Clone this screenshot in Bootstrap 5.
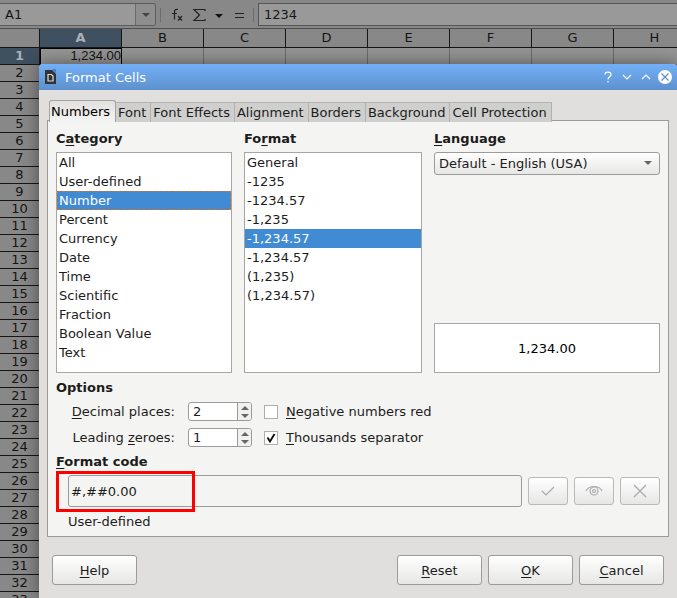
<!DOCTYPE html>
<html lang="en">
<head>
<meta charset="utf-8">
<meta name="viewport" content="width=device-width, initial-scale=1">
<title>Format Cells</title>
<link href="https://cdn.jsdelivr.net/npm/bootstrap@5.3.0/dist/css/bootstrap.min.css" rel="stylesheet">
<style>
  body { font-family: "DejaVu Sans", sans-serif; font-size: 13px; line-height: 19px; color: #1c1c1c; background: #8e8e8e; }
  button, input, select { color: inherit; font: inherit; }
  u { text-underline-offset: 2px; text-decoration-thickness: 1px; }

  /* spreadsheet behind the dialog */
  .formula-bar { height: 28px; background: #888; padding: 3px 0 2px; color: #161616; }
  .name-box { width: 156px; border: 1px solid #5c5c5c; border-left: 0; border-radius: 0 3px 3px 0; background: #999; overflow: hidden; }
  .name-box input { min-width: 0; border: 0; background: none; padding: 0 5px; }
  .name-box button { width: 20px; flex-shrink: 0; border: 0; border-left: 1px solid #6a6a6a; background: #8e8e8e; padding: 0; line-height: 0; }
  .tool { border: 0; background: none; padding: 0; line-height: 0; }
  .divide { width: 1px; height: 14px; background: #6c6c6c; }
  .formula-input { min-width: 0; border: 1px solid #555; border-right: 0; background: #999; padding: 0 5px; }
  .sheet { width: 696px; table-layout: fixed; border-collapse: separate; border-spacing: 0; border-top: 1px solid #4e4e4e; line-height: 16px; color: #141414; }
  .sheet th, .sheet td { padding: 0; font-weight: 400; text-align: center; overflow: visible; }
  .sheet thead th { height: 19px; background: #888; border-right: 1px solid #161616; border-bottom: 1px solid #161616; }
  .sheet tbody th { height: 17px; background: #888; border-right: 1px solid #161616; border-bottom: 1px solid #161616; }
  .sheet td { background: #959595; border-right: 1px solid #6d6d6d; border-bottom: 1px solid #6d6d6d; }
  .sheet .corner { width: 40px; }
  .sheet th.picked { background: #3f5060; color: #aab1b8; font-weight: 700; }
  .sheet td.current { font-family: "Liberation Sans", sans-serif; text-align: right; outline: 1px solid #000; outline-offset: -1px; box-shadow: 1px 0 #000; }

  /* dialog window */
  .dialog-window { position: absolute; left: 39px; right: 0; top: 64px; min-height: 534px; background: #e0dfdd; border-radius: 4px 4px 0 0; box-shadow: 0 0 18px rgba(0,0,0,.45); }
  .title-bar { height: 26px; padding: 0 4px 0 5px; color: #fff; background: linear-gradient(#73b0f8, #5d91cd); border-radius: 4px 4px 0 0; }
  .title-bar button { border: 0; background: none; padding: 0; line-height: 0; }
  .dialog-tabs { border: 0; padding: 10px 10px 0; margin-bottom: -2px; position: relative; z-index: 1; align-items: flex-end; }
  .dialog-tabs .nav-link, .dialog-tabs .nav-link:hover { padding: 0 4px 0 2px; height: 20px; border: 1px solid #b2b1af; border-left-width: 0; border-bottom: 0; border-radius: 0; margin: 0; color: #1c1c1c; background: #cfcfcd; line-height: 18px; }
  .dialog-tabs .nav-link.active { height: 22px; padding: 0 5px 0 1px; border-left-width: 1px; border-color: #a3a3a1; border-radius: 3px 3px 0 0; background: linear-gradient(#e2e1df, #f4f4f2); line-height: 20px; }
  .tab-panel { margin: 0 8px; padding: 8px 8px 5px; border: 1px solid #9b9b99; background: #f4f4f2; }
  .heading { font-size: 13px; font-weight: 700; line-height: 19px; margin: 0; }
  .pickers { display: grid; grid-template-columns: 176fr 178fr 226fr; column-gap: 12px; }
  .pick-list { height: 221px; margin-top: 4px; border: 1px solid #a6a6a4; border-radius: 0; background: #fff; }
  .pick-list .list-group-item { padding: 0 2px; border: 0; color: #1c1c1c; line-height: 19px; }
  .pick-list .list-group-item.active { background: #418bd4; color: #fff; margin: 0; }
  .pick-list .list-group-item.focused { border: 1px dashed #c8742a; padding: 0 1px; line-height: 17px; }
  .raised { border: 1px solid #9b9b99; border-radius: 3px; background: linear-gradient(#fff, #e6e6e5); padding: 0; }
  .language { width: 100%; height: 23px; margin-top: 4px; padding: 0 4px; appearance: none; }
  .arrow { pointer-events: none; }
  .preview { height: 50px; border: 1px solid #a6a6a4; background: #fff; color: #000; }
  .options-heading { margin-top: 5px; }
  .options { display: grid; grid-template-columns: 119px 64px 1fr; column-gap: 13px; row-gap: 7px; margin-top: 5px; }
  .options > * { height: 19px; }
  .spinner { border: 1px solid #9b9b99; border-radius: 3px; background: #fff; overflow: hidden; }
  .spinner input { width: 48px; border: 0; padding: 0 0 0 4px; background: none; appearance: textfield; }
  .spinner input::-webkit-inner-spin-button { display: none; }
  .steps { border-left: 1px solid #9b9b99; background: #f0f0ef; }
  .steps button { border: 0; background: none; padding: 0; line-height: 0; }
  .tick { width: 14px; height: 14px; margin: 0 8px 0 -1px; border: 1px solid #aeaeac; background: #fff; appearance: none; }
  .tick:checked { background: #fff url("data:image/svg+xml,%3Csvg xmlns='http://www.w3.org/2000/svg' viewBox='0 0 12 12'%3E%3Cpath d='M2.5 5.5L5 9.5L9.5 2' fill='none' stroke='%23111' stroke-width='1.9'/%3E%3C/svg%3E") center/12px no-repeat; }
  .code-label { margin-top: 5px; }
  .code-row { margin: 4px 0 5px 12px; }
  .code-input { min-width: 0; height: 32px; border: 1px solid #9b9b99; border-radius: 3px; background: #f4f4f2; padding: 0 2px; }
  .code-buttons { gap: 6px; margin-left: 6px; }
  .code-button { width: 40px; height: 28px; border-color: #bababa; line-height: 0; }
  .callout { position: absolute; left: -12px; top: -4px; width: 139px; height: 41px; border: 3px solid #f00; pointer-events: none; }
  .footer-bar { gap: 6px; padding: 18px 13px 13px; }
  .footer-bar button { width: 85px; height: 30px; }
</style>
<script src="https://cdn.jsdelivr.net/npm/bootstrap@5.3.0/dist/js/bootstrap.bundle.min.js"></script>
</head>
<body class="position-relative vh-100 overflow-hidden">
<div class="formula-bar d-flex">
  <div class="name-box d-flex flex-shrink-0">
    <input class="flex-grow-1" type="text" value="A1" aria-label="Name box">
    <button type="button" aria-label="Open name list"><svg width="10" height="6"><path d="M1 1h8L5 5z" fill="#444"/></svg></button>
  </div>
  <div class="d-flex align-items-center flex-shrink-0 ps-1"><span class="divide"></span></div>
  <div class="d-flex align-items-center flex-shrink-0 ps-2">
    <button class="tool" type="button" aria-label="Function wizard"><svg width="15" height="16" fill="none" stroke="#222"><path d="M9 2.500C6.500 2 5.500 3 5.500 5v7.500M3 6.500h5" stroke-width="1.200"/><path d="M9 9l4 4.500M13 9l-4 4.500" stroke-width="1.200"/></svg></button>
    <button class="tool ms-2" type="button" aria-label="Sum"><svg width="15" height="16" fill="none" stroke="#222"><path d="M13 4V2.500H2L7.500 8L2 13.500H13V12" stroke-width="1.200"/></svg></button>
    <button class="tool ms-2" type="button" aria-label="Sum options"><svg width="8" height="10"><path d="M0 4h8L4 8z" fill="#111"/></svg></button>
    <button class="tool ms-2 ps-1" type="button" aria-label="Formula"><svg width="10" height="10" stroke="#222"><path d="M0 3.500h9M0 7.500h9"/></svg></button>
    <span class="divide ms-2 me-1"></span>
  </div>
  <input class="formula-input flex-grow-1" type="text" value="1234" aria-label="Formula input">
</div>
<table class="sheet">
  <thead><tr><th class="corner"></th><th class="picked">A</th><th>B</th><th>C</th><th>D</th><th>E</th><th>F</th><th>G</th><th>H</th></tr></thead>
  <tbody id="rows">
    <tr><th class="picked">1</th><td class="current">1,234.00</td><td></td><td></td><td></td><td></td><td></td><td></td><td></td></tr>
  </tbody>
</table>

<div class="dialog-window" role="dialog" aria-labelledby="dialog-title">
  <div class="title-bar d-flex align-items-center">
    <svg width="13" height="16"><path d="M1 1h7l4 4v10H1z" fill="#303338"/><path d="M8 0h4v5z" fill="#4d80bc"/><path d="M4 5.500h3.500l1.500 1.500v5H4z" fill="none" stroke="#ddd" stroke-width="1.200"/></svg>
    <span id="dialog-title" class="ms-2 flex-grow-1">Format Cells</span>
    <div class="d-flex align-items-center gap-1">
      <button type="button" aria-label="Help"><svg width="14" height="14" fill="none" stroke="#fff" stroke-width="1.200"><path d="M4 4.500C4 1 10 1.500 10 4.500C10 7 7 6.500 7 9.500M7 11v1.500"/></svg></button>
      <button type="button" aria-label="Minimize"><svg width="15" height="14" fill="none" stroke="#fff" stroke-width="1.200"><path d="M4 5l4 4l4-4"/></svg></button>
      <button type="button" aria-label="Maximize"><svg width="15" height="14" fill="none" stroke="#fff" stroke-width="1.200"><path d="M4 9l4-4l4 4"/></svg></button>
      <button type="button" aria-label="Close"><svg width="16" height="16"><circle cx="8" cy="8" r="7" fill="#fff"/><path d="M4.500 4.500l7 7m0-7l-7 7" stroke="#5b8dc8" stroke-width="1.200"/></svg></button>
    </div>
  </div>
  <div class="nav nav-tabs dialog-tabs flex-nowrap text-nowrap" role="tablist">
    <button class="nav-link active" type="button" role="tab">Numbers</button>
    <button class="nav-link" type="button" role="tab">Font</button>
    <button class="nav-link" type="button" role="tab">Font Effects</button>
    <button class="nav-link" type="button" role="tab">Alignment</button>
    <button class="nav-link" type="button" role="tab">Borders</button>
    <button class="nav-link" type="button" role="tab">Background</button>
    <button class="nav-link" type="button" role="tab">Cell Protection</button>
  </div>
  <div class="tab-panel" role="tabpanel">
    <div class="pickers">
      <div>
        <h2 class="heading">C<u>a</u>tegory</h2>
        <div class="list-group pick-list">
          <button type="button" class="list-group-item list-group-item-action">All</button>
          <button type="button" class="list-group-item list-group-item-action">User-defined</button>
          <button type="button" class="list-group-item list-group-item-action active focused">Number</button>
          <button type="button" class="list-group-item list-group-item-action">Percent</button>
          <button type="button" class="list-group-item list-group-item-action">Currency</button>
          <button type="button" class="list-group-item list-group-item-action">Date</button>
          <button type="button" class="list-group-item list-group-item-action">Time</button>
          <button type="button" class="list-group-item list-group-item-action">Scientific</button>
          <button type="button" class="list-group-item list-group-item-action">Fraction</button>
          <button type="button" class="list-group-item list-group-item-action">Boolean Value</button>
          <button type="button" class="list-group-item list-group-item-action">Text</button>
        </div>
      </div>
      <div>
        <h2 class="heading">Fo<u>r</u>mat</h2>
        <div class="list-group pick-list">
          <button type="button" class="list-group-item list-group-item-action">General</button>
          <button type="button" class="list-group-item list-group-item-action">-1235</button>
          <button type="button" class="list-group-item list-group-item-action">-1234.57</button>
          <button type="button" class="list-group-item list-group-item-action">-1,235</button>
          <button type="button" class="list-group-item list-group-item-action active">-1,234.57</button>
          <button type="button" class="list-group-item list-group-item-action">-1,234.57</button>
          <button type="button" class="list-group-item list-group-item-action">(1,235)</button>
          <button type="button" class="list-group-item list-group-item-action">(1,234.57)</button>
        </div>
      </div>
      <div class="d-flex flex-column">
        <label class="heading" for="language"><u>L</u>anguage</label>
        <div class="position-relative">
          <select id="language" class="language raised"><option>Default - English (USA)</option></select>
          <svg class="arrow position-absolute end-0 bottom-0 me-2 mb-2" width="8" height="6"><path d="M0 0h8L4 4z" fill="#666"/></svg>
        </div>
        <div class="preview mt-auto d-flex align-items-center justify-content-center">1,234.00</div>
      </div>
    </div>

    <h2 class="heading options-heading">Options</h2>
    <div class="options">
      <label class="text-end text-nowrap" for="decimals"><u>D</u>ecimal places:</label>
      <div class="spinner d-flex">
        <input id="decimals" type="number" value="2">
        <div class="steps flex-grow-1 d-flex flex-column justify-content-center align-items-center">
          <button type="button" aria-label="More decimal places"><svg width="8" height="7"><path d="M0 5h8L4 1z" fill="#666"/></svg></button>
          <button type="button" aria-label="Fewer decimal places"><svg width="8" height="7"><path d="M0 2h8L4 6z" fill="#666"/></svg></button>
        </div>
      </div>
      <div class="d-flex align-items-center"><input class="tick" id="red" type="checkbox"><label for="red"><u>N</u>egative numbers red</label></div>
      <label class="text-end text-nowrap" for="zeroes">Leading <u>z</u>eroes:</label>
      <div class="spinner d-flex">
        <input id="zeroes" type="number" value="1">
        <div class="steps flex-grow-1 d-flex flex-column justify-content-center align-items-center">
          <button type="button" aria-label="More leading zeroes"><svg width="8" height="7"><path d="M0 5h8L4 1z" fill="#666"/></svg></button>
          <button type="button" aria-label="Fewer leading zeroes"><svg width="8" height="7"><path d="M0 2h8L4 6z" fill="#666"/></svg></button>
        </div>
      </div>
      <div class="d-flex align-items-center"><input class="tick" id="thousands" type="checkbox" checked><label for="thousands"><u>T</u>housands separator</label></div>
    </div>

    <label class="heading code-label d-block" for="code"><u>F</u>ormat code</label>
    <div class="code-row position-relative d-flex align-items-center">
      <input class="code-input flex-grow-1" id="code" type="text" value="#,##0.00">
      <div class="d-flex code-buttons">
        <button class="raised code-button" type="button" aria-label="Add" disabled><svg width="14" height="12" fill="none" stroke="#aaa" stroke-width="1.200"><path d="M1 6l4 4l8-8"/></svg></button>
        <button class="raised code-button" type="button" aria-label="Edit comment" disabled><svg width="18" height="12" fill="none" stroke="#aaa" stroke-width="1.200"><path d="M1 6C4 0 14 0 17 6"/><circle cx="9" cy="6" r="4"/><circle cx="9" cy="6" r="1.500"/></svg></button>
        <button class="raised code-button" type="button" aria-label="Remove" disabled><svg width="14" height="14" stroke="#aaa" stroke-width="1.200"><path d="M1 1l12 12M13 1L1 13"/></svg></button>
      </div>
      <div class="callout"></div>
    </div>
    <div class="ms-2 ps-1">User-defined</div>
  </div>
  <div class="footer-bar d-flex">
    <button class="raised me-auto" type="button"><u>H</u>elp</button>
    <button class="raised" type="button"><u>R</u>eset</button>
    <button class="raised" type="button"><u>O</u>K</button>
    <button class="raised" type="button"><u>C</u>ancel</button>
  </div>
</div>
<script>
  const rows = document.getElementById("rows");
  for (let n = 2; n <= 33; n++) {
    rows.insertAdjacentHTML("beforeend", "<tr><th>" + n + "</th>" + "<td></td>".repeat(8) + "</tr>");
  }
</script>
</body>
</html>
